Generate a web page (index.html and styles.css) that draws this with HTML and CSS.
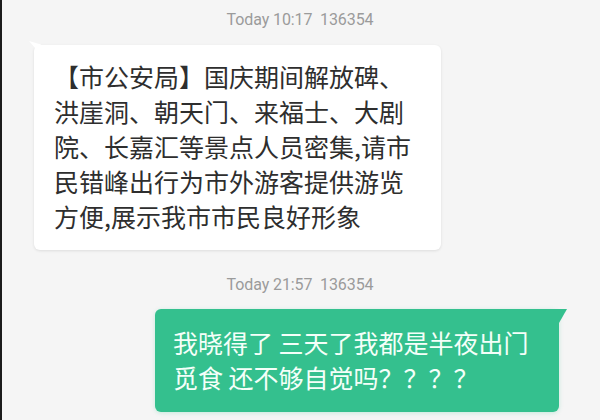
FILE: index.html
```html
<!DOCTYPE html>
<html lang="zh-CN">
<head>
<meta charset="utf-8">
<title>短信</title>
<link rel="stylesheet" href="styles.css">
</head>
<body>
<div class="screen">
  <div class="stamp stamp-first">Today 10:17&nbsp; 136354</div>
  <div class="bubble bubble-in">【市公安局】国庆期间解放碑、<br>洪崖洞、朝天门、来福士、大剧<br>院、长嘉汇等景点人员密集,请市<br>民错峰出行为市外游客提供游览<br>方便,展示我市市民良好形象</div>
  <div class="stamp stamp-second">Today 21:57&nbsp; 136354</div>
  <div class="bubble bubble-out">我晓得了 三天了我都是半夜出门<br>觅食 还不够自觉吗？？？？</div>
</div>
</body>
</html>
```

FILE: styles.css
```css
html, body {
  margin: 0;
  padding: 0;
  background: #f5f5f5;
}

.screen {
  box-sizing: border-box;
  width: 600px;
  height: 420px;
  overflow: hidden;
  border-left: 2px solid #1c1c1c;
  background: #f5f5f5;
  display: flex;
  flex-direction: column;
  align-items: flex-start;
  font-family: "Noto Sans CJK SC", "Noto Sans", sans-serif;
}

.stamp {
  align-self: center;
  margin-left: -2px;
  font-family: Roboto, "Noto Sans", sans-serif;
  font-size: 16px;
  line-height: 20px;
  color: #9b9b9b;
  letter-spacing: -0.1px;
  white-space: nowrap;
}

.stamp-first {
  margin-top: 10px;
}

.stamp-second {
  margin-top: 25px;
}

.bubble {
  position: relative;
  box-sizing: border-box;
  font-size: 25px;
  line-height: 35px;
  white-space: nowrap;
  border-radius: 6px;
}

.bubble-in {
  margin-top: 15px;
  margin-left: 32px;
  width: 407px;
  padding: 14px 20px 16px 20px;
  background: #ffffff;
  color: #2e2e2e;
  box-shadow: 0 1px 3px rgba(0, 0, 0, 0.10);
}

.bubble-in::before {
  content: "";
  position: absolute;
  left: -5px;
  top: -4px;
  width: 12px;
  height: 14px;
  background: #ffffff;
  clip-path: polygon(0 0, 100% 25%, 100% 100%);
}

.bubble-out {
  margin-top: 14px;
  margin-left: 153px;
  width: 404px;
  padding: 16px 17px 17px 18px;
  background: #34c08e;
  color: #f4fff9;
  box-shadow: 0 1px 4px rgba(60, 200, 150, 0.25);
}

.bubble-out::after {
  content: "";
  position: absolute;
  right: -8px;
  top: 0;
  width: 16px;
  height: 14px;
  background: #34c08e;
  clip-path: polygon(0 0, 100% 0, 50% 100%, 0 100%);
}
```
